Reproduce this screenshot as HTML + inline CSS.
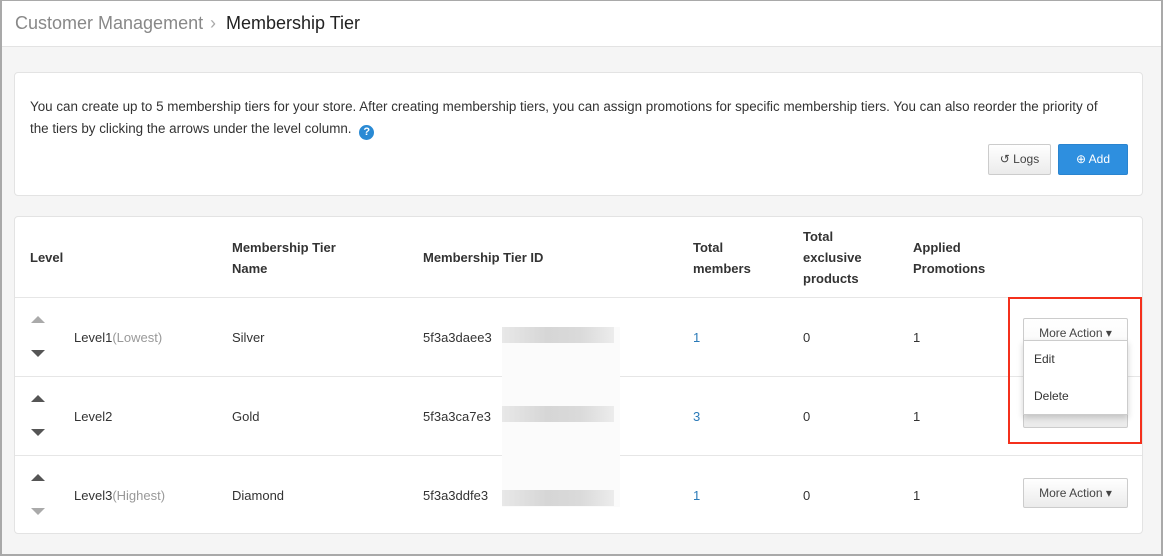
<!DOCTYPE html>
<html><head><style>
*{box-sizing:border-box;margin:0;padding:0}
body{width:1163px;height:556px;overflow:hidden;font-family:"Liberation Sans",sans-serif;font-size:13px;color:#333;background:#f5f5f5;position:relative}
.frame{position:absolute;left:0;top:0;width:1163px;height:556px;border:2px solid #a9a9a9;border-top:1px solid #a9a9a9}
.hdr{position:absolute;left:2px;top:1px;width:1159px;height:46px;background:#fff;border-bottom:1px solid #e3e3e3}
.hdr span{position:absolute;top:12px;font-size:18px}
.card{position:absolute;left:14px;width:1129px;background:#fff;border:1px solid #e3e3e3;border-radius:4px}
.a{position:absolute;white-space:nowrap}
.btn{position:absolute;border:1px solid #ccc;border-radius:2px;background:linear-gradient(#fff,#ebebeb);font-size:12px;color:#444;text-align:center}
.th{font-weight:bold;line-height:21px}
.line{position:absolute;left:0;width:1127px;height:1px;background:#e6e6e6}
.up,.dn{position:absolute;left:16px;width:0;height:0;border-left:7px solid transparent;border-right:7px solid transparent}
.up{border-bottom:7px solid #555}.dn{border-top:7px solid #555}
.blur{position:absolute;background:linear-gradient(90deg,#e8e8e8,#d6d6d6 40%,#dadada 70%,#ececec)}
.blurl{position:absolute;background:#fbfbfb}
</style></head><body>
<div class="hdr"><span style="left:13px;color:#888">Customer Management</span><span style="left:208px;color:#aaa">›</span><span style="left:224px;color:#222">Membership Tier</span></div>

<div class="card" style="top:72px;height:124px">
<div class="a" style="left:15px;top:23px;line-height:22px;white-space:normal;width:1070px;font-size:13.4px">You can create up to 5 membership tiers for your store. After creating membership tiers, you can assign promotions for specific membership tiers. You can also reorder the priority of the tiers by clicking the arrows under the level column. <span style="display:inline-block;width:15px;height:15px;border-radius:50%;background:#2a8ad4;color:#fff;font-size:11px;font-weight:bold;text-align:center;line-height:15px;vertical-align:-2px;margin-left:4px">?</span></div>
<div class="btn" style="left:973px;top:71px;width:63px;height:31px;line-height:29px">↺ Logs</div>
<div class="btn" style="left:1043px;top:71px;width:70px;height:31px;line-height:29px;background:#2e8fdf;border-color:#2a84cf;color:#fff">⊕ Add</div>
</div>

<div class="card" style="top:216px;height:318px">
<div class="a th" style="left:15px;top:30px">Level</div>
<div class="a th" style="left:217px;top:20px">Membership Tier<br>Name</div>
<div class="a th" style="left:408px;top:30px">Membership Tier ID</div>
<div class="a th" style="left:678px;top:20px">Total<br>members</div>
<div class="a th" style="left:788px;top:9px">Total<br>exclusive<br>products</div>
<div class="a th" style="left:898px;top:20px">Applied<br>Promotions</div>
<div class="line" style="top:80px"></div>
<div class="line" style="top:159px"></div>
<div class="line" style="top:238px"></div>

<div class="up" style="top:99px;border-bottom-color:#aaa"></div><div class="dn" style="top:133px"></div>
<div class="a" style="left:59px;top:113px">Level1<span style="color:#999">(Lowest)</span></div>
<div class="a" style="left:217px;top:113px">Silver</div>
<div class="a" style="left:408px;top:113px">5f3a3daee3</div>
<div class="a" style="left:678px;top:113px;color:#2a7ab8">1</div>
<div class="a" style="left:788px;top:113px">0</div>
<div class="a" style="left:898px;top:113px">1</div>

<div class="up" style="top:178px"></div><div class="dn" style="top:212px"></div>
<div class="a" style="left:59px;top:192px">Level2</div>
<div class="a" style="left:217px;top:192px">Gold</div>
<div class="a" style="left:408px;top:192px">5f3a3ca7e3</div>
<div class="a" style="left:678px;top:192px;color:#2a7ab8">3</div>
<div class="a" style="left:788px;top:192px">0</div>
<div class="a" style="left:898px;top:192px">1</div>

<div class="up" style="top:257px"></div><div class="dn" style="top:291px;border-top-color:#aaa"></div>
<div class="a" style="left:59px;top:271px">Level3<span style="color:#999">(Highest)</span></div>
<div class="a" style="left:217px;top:271px">Diamond</div>
<div class="a" style="left:408px;top:271px">5f3a3ddfe3</div>
<div class="a" style="left:678px;top:271px;color:#2a7ab8">1</div>
<div class="a" style="left:788px;top:271px">0</div>
<div class="a" style="left:898px;top:271px">1</div>
<div class="btn" style="left:1008px;top:261px;width:105px;height:30px;line-height:28px">More Action ▾</div>
</div>

<div class="blurl" style="left:502px;top:327px;width:118px;height:180px"></div>
<div class="blur" style="left:502px;top:327px;width:112px;height:16px"></div>
<div class="blur" style="left:502px;top:406px;width:112px;height:16px"></div>
<div class="blur" style="left:502px;top:490px;width:112px;height:16px"></div>

<div class="btn" style="left:1023px;top:318px;width:105px;height:110px;line-height:28px;text-align:center">More Action ▾</div>
<div style="position:absolute;left:1023px;top:340px;width:105px;height:75px;background:#fff;border:1px solid #ccc;box-shadow:0 3px 6px rgba(0,0,0,.18)">
<div class="a" style="left:10px;top:11px;font-size:12px">Edit</div>
<div class="a" style="left:10px;top:48px;font-size:12px">Delete</div>
</div>
<div style="position:absolute;left:1008px;top:297px;width:134px;height:147px;border:2px solid #f4301c"></div>
<div class="frame"></div>
</body></html>
